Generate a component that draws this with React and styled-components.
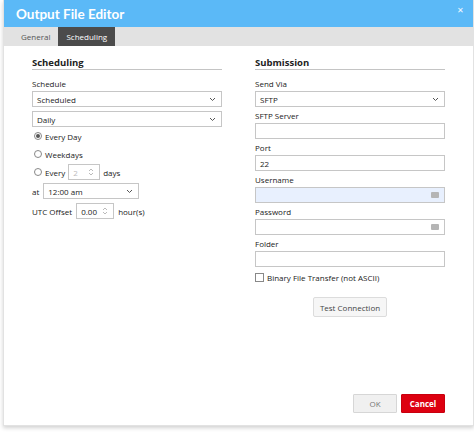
import styled, { createGlobalStyle } from 'styled-components';

const Global = createGlobalStyle`
  html, body { margin: 0; padding: 0; background: #fff; }
  body { font-family: "Open Sans", "Liberation Sans", sans-serif; color: #222; }
  * { box-sizing: border-box; }
`;

const Page = styled.div`
  width: 474px;
  height: 432px;
  padding: 0 2px 6px 3px;
  display: flex;
`;

const Dialog = styled.div`
  flex: 1;
  display: flex;
  flex-direction: column;
  background: #fff;
  border: 1px solid #e2e2e2;
  border-top: none;
  box-shadow: 0 2px 4px rgba(0, 0, 0, 0.18);
`;

const Header = styled.div`
  height: 27px;
  background: #5bb9f7;
  display: flex;
  align-items: center;
  justify-content: space-between;
  padding: 0 9px 0 12px;
`;

const Title = styled.h1`
  margin: 0;
  font-family: Lato, "Open Sans", sans-serif;
  font-size: 13.5px;
  font-weight: 700;
  color: #fff;
`;

const Close = styled.span`
  color: #f2f8ff;
  font-size: 8px;
  margin-top: -9px;
`;

const TabBar = styled.div`
  height: 19px;
  background: #e2e2e2;
  display: flex;
  padding-left: 9px;
`;

const Tab = styled.div`
  padding: 0 8px;
  display: flex;
  align-items: center;
  font-size: 8px;
  color: ${(p) => (p.active ? '#fff' : '#555')};
  background: ${(p) => (p.active ? '#4b4b4b' : 'transparent')};
`;

const Body = styled.div`
  flex: 1;
  display: grid;
  grid-template-columns: 190px 190px;
  column-gap: 33px;
  padding: 10px 28px 0 28px;
`;

const Column = styled.div`
  display: flex;
  flex-direction: column;
`;

const Heading = styled.h2`
  margin: 0 0 7px;
  font-size: 9.5px;
  font-weight: 700;
  color: #222;
  line-height: 13px;
  border-bottom: 1px solid #c4c4c4;
`;

const Label = styled.label`
  font-size: 8px;
  line-height: 14px;
`;

const Field = styled.div`
  height: 16px;
  border: 1px solid #c6c6c6;
  background: ${(p) => p.bg || '#fff'};
  display: flex;
  align-items: center;
  justify-content: space-between;
  padding: 0 5px 0 4px;
  font-size: 8px;
  color: ${(p) => (p.muted ? '#bbb' : '#222')};
  width: ${(p) => p.width || 'auto'};
  margin-bottom: ${(p) => (p.gap !== undefined ? p.gap : 2)}px;
`;

const Chevron = () => (
  <svg width="7" height="5" viewBox="0 0 7 5">
    <path d="M1 1l2.5 2.5L6 1" fill="none" stroke="#555" strokeWidth="1" />
  </svg>
);

const Spinner = () => (
  <svg width="6" height="8" viewBox="0 0 6 8">
    <path d="M1 3l2-2 2 2M1 5l2 2 2-2" fill="none" stroke="#aaa" strokeWidth="0.8" />
  </svg>
);

const KeyBadge = styled.span`
  margin-left: auto;
  width: 8px;
  height: 6px;
  background: #b5b5b5;
  border-radius: 1px;
`;

const RadioRow = styled.div`
  display: flex;
  align-items: center;
  gap: 3px;
  height: 18px;
  padding-left: 2px;
  font-size: 8px;
`;

const Radio = styled.span`
  width: 8px;
  height: 8px;
  border-radius: 50%;
  border: 1px solid #888;
  display: flex;
  align-items: center;
  justify-content: center;
  &::after {
    content: '';
    width: 4px;
    height: 4px;
    border-radius: 50%;
    background: ${(p) => (p.checked ? '#555' : 'transparent')};
  }
`;

const Inline = styled.div`
  display: flex;
  align-items: center;
  gap: 4px;
  height: 20px;
  font-size: 8px;
`;

const Check = styled.span`
  width: 9px;
  height: 9px;
  border: 1px solid #888;
  background: #fff;
`;

const CheckRow = styled.div`
  display: flex;
  align-items: center;
  gap: 3px;
  height: 16px;
  font-size: 8px;
`;

const TestButton = styled.button`
  align-self: center;
  margin-top: 12px;
  height: 20px;
  padding: 0 6px;
  font: inherit;
  font-size: 8px;
  color: #444;
  background: #f6f6f6;
  border: 1px solid #dcdcdc;
  border-radius: 2px;
`;

const Footer = styled.div`
  display: flex;
  justify-content: flex-end;
  gap: 4px;
  padding: 0 28px 12px;
`;

const Button = styled.button`
  width: 44px;
  height: 19px;
  font: inherit;
  font-size: 8px;
  font-weight: ${(p) => (p.primary ? 700 : 400)};
  color: ${(p) => (p.primary ? '#fff' : '#777')};
  background: ${(p) => (p.primary ? '#dd0010' : '#f0f0f0')};
  border: 1px solid ${(p) => (p.primary ? '#c8000e' : '#d6d6d6')};
  border-radius: 1px;
`;

const submission = [
  { label: 'SFTP Server' },
  { label: 'Port', value: '22' },
  { label: 'Username', bg: '#e8f0fe', key: true },
  { label: 'Password', key: true },
  { label: 'Folder' },
];

export default function App() {
  return (
    <Page>
      <Global />
      <Dialog>
        <Header>
          <Title>Output File Editor</Title>
          <Close>✕</Close>
        </Header>
        <TabBar>
          <Tab>General</Tab>
          <Tab active>Scheduling</Tab>
        </TabBar>
        <Body>
          <Column>
            <Heading>Scheduling</Heading>
            <Label>Schedule</Label>
            <Field gap={4}>Scheduled<Chevron /></Field>
            <Field gap={0}>Daily<Chevron /></Field>
            <RadioRow><Radio checked />Every Day</RadioRow>
            <RadioRow><Radio />Weekdays</RadioRow>
            <RadioRow>
              <Radio />Every
              <Field width="32px" gap={0} muted>2<Spinner /></Field>
              days
            </RadioRow>
            <Inline>
              at<Field width="96px" gap={0}>12:00 am<Chevron /></Field>
            </Inline>
            <Inline>
              UTC Offset<Field width="38px" gap={0}>0.00<Spinner /></Field>hour(s)
            </Inline>
          </Column>
          <Column>
            <Heading>Submission</Heading>
            <Label>Send Via</Label>
            <Field>SFTP<Chevron /></Field>
            {submission.map((f) => (
              <Column key={f.label}>
                <Label>{f.label}</Label>
                <Field bg={f.bg}>{f.value}{f.key && <KeyBadge />}</Field>
              </Column>
            ))}
            <CheckRow><Check />Binary File Transfer (not ASCII)</CheckRow>
            <TestButton>Test Connection</TestButton>
          </Column>
        </Body>
        <Footer>
          <Button>OK</Button>
          <Button primary>Cancel</Button>
        </Footer>
      </Dialog>
    </Page>
  );
}
